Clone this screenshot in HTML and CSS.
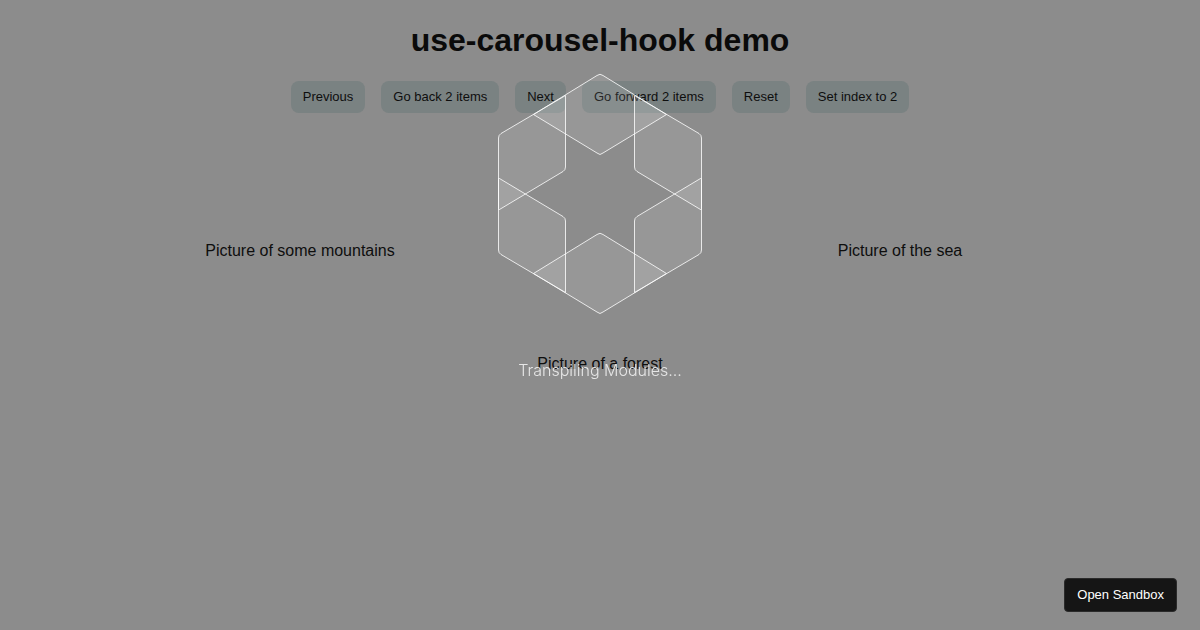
FILE: index.html
```
<!DOCTYPE html>
<html lang="en">
<head>
    <meta charset="utf-8">
    <title>use-carousel-hook demo</title>
    <link rel="stylesheet" href="styles.css">
</head>
<body>
    <main class="app">
        <h1>use-carousel-hook demo</h1>
        <div class="controls">
            <button class="control">Previous</button>
            <button class="control">Go back 2 items</button>
            <button class="control">Next</button>
            <button class="control">Go forward 2 items</button>
            <button class="control">Reset</button>
            <button class="control">Set index to 2</button>
        </div>
        <ul class="carousel">
            <li>Picture of some mountains</li>
            <li>Picture of the sea</li>
            <li class="wide">Picture of a forest</li>
        </ul>
    </main>

    <div class="loading">
        <svg class="cube" width="220" height="260" viewBox="0 0 220 260" aria-hidden="true">
            <path d="M107 10.5Q110 8 113 10.5L176.5 49.5L113 88Q110 91 107 88L43.5 49.5Z"/>
            <path d="M107 169.5Q110 167 113 169.5L176.5 208.5L113 247Q110 250 107 247L43.5 208.5Z"/>
            <path d="M75.5 30.5V102Q75.5 105 73 106.5L9.5 144.5Q8.5 145 8.5 143.5V73Q8.5 70 11 68.5Z"/>
            <path d="M144.5 30.5V102Q144.5 105 147 106.5L210.5 144.5Q211.5 145 211.5 143.5V73Q211.5 70 209 68.5Z"/>
            <path d="M75.5 227.5V156Q75.5 153 73 151.5L9.5 113.5Q8.5 113 8.5 114.5V185Q8.5 188 11 189.5Z"/>
            <path d="M144.5 227.5V156Q144.5 153 147 151.5L210.5 113.5Q211.5 113 211.5 114.5V185Q211.5 188 209 189.5Z"/>
        </svg>
        <p>Transpiling Modules...</p>
    </div>

    <a class="open-sandbox" href="#">Open Sandbox</a>
</body>
</html>
```
FILE: styles.css
```
body {
    margin: 0;
    background-color: #8c8c8c;
    color: #0e0e0e;
    font-family: "Liberation Sans", Arial, sans-serif;
    font-size: 16px;
}

.app {
    text-align: center;
}

h1 {
    margin: 0;
    padding: 22px 0 23px;
    font-size: 32px;
    line-height: 36px;
    color: #0a0a0a;
}

.controls {
    display: flex;
    justify-content: center;
    gap: 16px;
}

.control {
    padding: 8px 12px;
    border: none;
    border-radius: 8px;
    background-color: #7a8282;
    color: #0e0e0e;
    font-family: inherit;
    font-size: 13px;
    line-height: 16px;
    cursor: pointer;
}

.carousel {
    display: grid;
    grid-template-columns: 1fr 1fr;
    margin: 0;
    padding: 81px 0 0;
    list-style: none;
}

.carousel li {
    padding: 48px 0;
    line-height: 17px;
}

.carousel .wide {
    grid-column: span 2;
}

/* loading overlay on top of the demo */
.loading {
    position: fixed;
    inset: 0;
    display: flex;
    flex-direction: column;
    align-items: center;
    padding-top: 65px;
    pointer-events: none;
}

.cube {
    fill: rgba(255, 255, 255, 0.1);
    stroke: rgba(255, 255, 255, 0.8);
    stroke-width: 1;
}

.loading p {
    margin: 35px 0 0;
    font-family: Inter, sans-serif;
    font-weight: 300;
    line-height: 20px;
    color: #e6e6e6;
}

.open-sandbox {
    position: fixed;
    right: 23px;
    bottom: 18px;
    padding: 8px 12px;
    border: 1px solid #2b2b2b;
    border-radius: 4px;
    background-color: #151515;
    color: #fff;
    font-size: 13px;
    line-height: 16px;
    text-decoration: none;
}
```
